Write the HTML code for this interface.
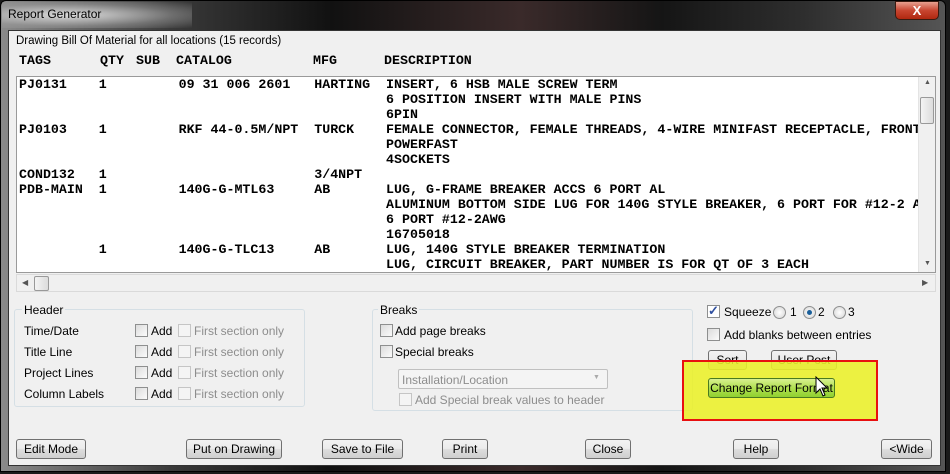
<!DOCTYPE html>
<html><head><meta charset="utf-8"><style>
*{box-sizing:border-box;margin:0;padding:0}
body{width:950px;height:474px;overflow:hidden;background:#1a1a1a;font-family:"Liberation Sans",sans-serif;font-size:12px;color:#000;position:relative}
.a{position:absolute}
#frame{left:0;top:0;width:946px;height:472px;background:linear-gradient(90deg,#8a8a8a 0,#3a3a3a 18%,#111 35%,#3a2a2a 55%,#151515 70%,#2e2e2e 85%,#555 100%);border:1px solid #000;border-radius:6px 6px 0 0}
#client{left:8px;top:30px;width:933px;height:436px;background:#f0f0f0;border:1px solid #333}
.title{left:8px;top:7px;font-size:12px;color:#000}
.titlebg{left:2px;top:2px;width:190px;height:26px;background:radial-gradient(ellipse at 35% 50%,rgba(225,225,225,.95),rgba(160,160,160,.5) 60%,rgba(100,100,100,0) 100%)}
#x{left:895px;top:1px;width:44px;height:19px;background:linear-gradient(#e8a090,#c84530 50%,#b02810);border:1px solid #3a1a10;border-radius:0 0 5px 5px;color:#fff;font-weight:bold;text-align:center;font-size:13px;line-height:17px}
#list{left:16px;top:76px;width:920px;height:197px;background:#fff;border:1px solid #9a9a9a;overflow:hidden}
.mono{font-family:"Liberation Mono",monospace;font-weight:bold;font-size:13.3px;line-height:15px;white-space:pre}
#vs{left:918px;top:77px;width:17px;height:195px;background:#f0f0f0;border-left:1px solid #e4e4e4}
#hs{left:16px;top:274px;width:920px;height:18px;background:#f0f0f0;border:1px solid #dadada}
.thumb{background:linear-gradient(90deg,#f4f4f4,#dcdcdc);border:1px solid #999;border-radius:2px}
.grp{border:1px solid #d5dfe5;border-radius:3px}
.gl{background:#f0f0f0;padding:0 2px}
.cb{width:13px;height:13px;border:1px solid #8e8f8f;background:linear-gradient(135deg,#dcdcdc,#fbfbfb)}
.cbd{width:13px;height:13px;border:1px solid #c5c5c5;background:#f4f4f4}
.dis{color:#8d8d8d}
.btn{border:1px solid #707070;border-radius:3px;background:linear-gradient(#f2f2f2 0,#ebebeb 48%,#dddddd 52%,#cfcfcf 100%);text-align:center;line-height:18px;font-size:12px}
.rad{width:13px;height:13px;border-radius:50%;border:1px solid #8e8f8f;background:radial-gradient(#fff,#d4d4d4)}
</style></head><body>
<div class="a" id="frame"></div>
<div class="a titlebg"></div>
<div class="a title">Report Generator</div>
<div class="a" id="x">X</div>
<div class="a" id="client"></div>
<div class="a" style="left:16px;top:35px;font-size:11.5px">Drawing Bill Of Material for all locations (15 records)</div>
<div class="a mono" style="left:19px;top:53px">TAGS</div>
<div class="a mono" style="left:100px;top:53px">QTY</div>
<div class="a mono" style="left:136px;top:53px">SUB</div>
<div class="a mono" style="left:176px;top:53px">CATALOG</div>
<div class="a mono" style="left:313px;top:53px">MFG</div>
<div class="a mono" style="left:384px;top:53px">DESCRIPTION</div>
<div class="a" id="list"><div class="a mono" style="left:2px;top:0px">PJ0131    1         09 31 006 2601   HARTING  INSERT, 6 HSB MALE SCREW TERM
                                              6 POSITION INSERT WITH MALE PINS
                                              6PIN
PJ0103    1         RKF 44-0.5M/NPT  TURCK    FEMALE CONNECTOR, FEMALE THREADS, 4-WIRE MINIFAST RECEPTACLE, FRONT
                                              POWERFAST
                                              4SOCKETS
COND132   1                          3/4NPT
PDB-MAIN  1         140G-G-MTL63     AB       LUG, G-FRAME BREAKER ACCS 6 PORT AL
                                              ALUMINUM BOTTOM SIDE LUG FOR 140G STYLE BREAKER, 6 PORT FOR #12-2 AWG
                                              6 PORT #12-2AWG
                                              16705018
          1         140G-G-TLC13     AB       LUG, 140G STYLE BREAKER TERMINATION
                                              LUG, CIRCUIT BREAKER, PART NUMBER IS FOR QT OF 3 EACH</div></div>
<div class="a" id="vs"><div class="a" style="left:5px;top:2px;font-size:7px;color:#555">▲</div><div class="a thumb" style="left:1px;top:20px;width:14px;height:27px"></div><div class="a" style="left:5px;top:183px;font-size:7px;color:#555">▼</div></div>
<div class="a" id="hs"><div class="a" style="left:5px;top:3px;font-size:8px;color:#555">◀</div><div class="a thumb" style="left:17px;top:1px;width:15px;height:15px"></div><div class="a" style="left:905px;top:3px;font-size:8px;color:#555">▶</div></div>

<div class="a grp" style="left:14px;top:309px;width:291px;height:98px"></div>
<div class="a gl" style="left:22px;top:303px">Header</div>
<div class="a" style="left:24px;top:324px">Time/Date</div>
<div class="a" style="left:24px;top:345px">Title Line</div>
<div class="a" style="left:24px;top:366px">Project Lines</div>
<div class="a" style="left:24px;top:387px">Column Labels</div>
<div class="a cb" style="left:135px;top:324px"></div><div class="a" style="left:151px;top:324px">Add</div><div class="a cbd" style="left:178px;top:324px"></div><div class="a dis" style="left:194px;top:324px">First section only</div>
<div class="a cb" style="left:135px;top:345px"></div><div class="a" style="left:151px;top:345px">Add</div><div class="a cbd" style="left:178px;top:345px"></div><div class="a dis" style="left:194px;top:345px">First section only</div>
<div class="a cb" style="left:135px;top:366px"></div><div class="a" style="left:151px;top:366px">Add</div><div class="a cbd" style="left:178px;top:366px"></div><div class="a dis" style="left:194px;top:366px">First section only</div>
<div class="a cb" style="left:135px;top:387px"></div><div class="a" style="left:151px;top:387px">Add</div><div class="a cbd" style="left:178px;top:387px"></div><div class="a dis" style="left:194px;top:387px">First section only</div>

<div class="a grp" style="left:372px;top:309px;width:321px;height:102px"></div>
<div class="a gl" style="left:378px;top:303px">Breaks</div>
<div class="a cb" style="left:380px;top:324px"></div><div class="a" style="left:395px;top:324px">Add page breaks</div>
<div class="a cb" style="left:380px;top:345px"></div><div class="a" style="left:395px;top:345px">Special breaks</div>
<div class="a" style="left:398px;top:369px;width:210px;height:20px;border:1px solid #c0c0c0;border-radius:2px;background:#f4f4f4"><div class="a dis" style="left:3px;top:3px">Installation/Location</div><div class="a" style="left:194px;top:4px;font-size:7px;color:#aaa">▼</div></div>
<div class="a cbd" style="left:399px;top:393px"></div><div class="a dis" style="left:415px;top:393px">Add Special break values to header</div>

<div class="a cb" style="left:707px;top:305px;background:#fff"><div class="a" style="left:0px;top:-3px;color:#3050a0;font-size:13px;font-weight:bold">✓</div></div>
<div class="a" style="left:724px;top:305px">Squeeze</div>
<div class="a rad" style="left:773px;top:306px"></div><div class="a" style="left:790px;top:305px">1</div>
<div class="a rad" style="left:803px;top:306px"><div class="a" style="left:3px;top:3px;width:5px;height:5px;border-radius:50%;background:#1a5f9a"></div></div><div class="a" style="left:818px;top:305px">2</div>
<div class="a rad" style="left:833px;top:306px"></div><div class="a" style="left:848px;top:305px">3</div>
<div class="a cb" style="left:707px;top:328px"></div><div class="a" style="left:724px;top:328px">Add blanks between entries</div>
<div class="a btn" style="left:708px;top:350px;width:39px;height:20px">Sort</div>
<div class="a btn" style="left:771px;top:350px;width:66px;height:20px">User Post</div>
<div class="a" style="left:682px;top:360px;width:196px;height:61px;background:rgba(235,240,40,.88);border:2px solid #e81010"></div>
<div class="a btn" style="left:708px;top:378px;width:127px;height:20px;background:linear-gradient(#d8f090,#b0e050 50%,#90d030);border-color:#4a7a20">Change Report Format</div>
<svg class="a" style="left:815px;top:376px" width="14" height="22" viewBox="0 0 14 22"><path d="M1 1 L1 17 L5 13 L8 20 L10 19 L7 12 L12 12 Z" fill="#fff" stroke="#000" stroke-width="1"/></svg>

<div class="a btn" style="left:16px;top:439px;width:70px;height:20px">Edit Mode</div>
<div class="a btn" style="left:186px;top:439px;width:96px;height:20px">Put on Drawing</div>
<div class="a btn" style="left:322px;top:439px;width:81px;height:20px">Save to File</div>
<div class="a btn" style="left:442px;top:439px;width:46px;height:20px">Print</div>
<div class="a btn" style="left:585px;top:439px;width:46px;height:20px">Close</div>
<div class="a btn" style="left:733px;top:439px;width:46px;height:20px">Help</div>
<div class="a btn" style="left:881px;top:439px;width:51px;height:20px">&lt;Wide</div>
</body></html>
